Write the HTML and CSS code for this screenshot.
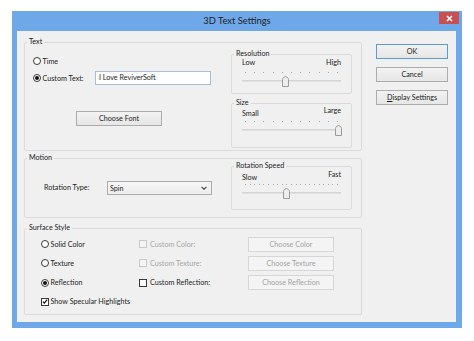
FILE: index.html
```html
<!DOCTYPE html>
<html>
<head>
<meta charset="utf-8">
<link rel="stylesheet" href="styles.css">
</head>
<body>
<div class="window">
  <div class="titlebar">
    <span></span>
    <span class="title">3D Text Settings</span>
    <span class="close"><svg width="7" height="7" viewBox="0 0 7 7"><path d="M1 1L6 6M6 1L1 6" stroke="#fff" stroke-width="1.6"/></svg></span>
  </div>
  <div class="client">
    <div class="groups">
      <fieldset class="group g-text">
        <legend>Text</legend>
        <div class="text-left">
          <div class="opt"><span class="radio"></span><span>Time</span></div>
          <div class="custom-row">
            <div class="opt custom-lbl"><span class="radio on"></span><span>Custom Text:</span></div>
            <div class="input">I Love ReviverSoft</div>
          </div>
          <div class="btn font-btn">Choose Font</div>
        </div>
        <div class="side">
          <fieldset class="sub">
            <legend>Resolution</legend>
            <div class="sl sl-res">
              <div class="sl-labels"><span>Low</span><span>High</span></div>
              <div class="slider">
                <div class="ticks"><i></i><i></i><i></i><i></i><i></i><i></i><i></i><i></i><i></i><i></i><i></i></div>
                <div class="track"></div>
                <svg class="thumb" style="--v:0.44" width="7" height="11" viewBox="0 0 7 11"><path d="M0.5 3.5Q0.5 2.5 1.5 1.5L3.5 0.5L5.5 1.5Q6.5 2.5 6.5 3.5V10.5H0.5Z" fill="#ededed" stroke="#9c9c9c"/></svg>
              </div>
            </div>
          </fieldset>
          <fieldset class="sub sub-size">
            <legend>Size</legend>
            <div class="sl sl-size">
              <div class="sl-labels"><span class="low">Small</span><span>Large</span></div>
              <div class="slider">
                <div class="ticks"><i></i><i></i><i></i><i></i><i></i><i></i><i></i><i></i><i></i><i></i><i></i></div>
                <div class="track"></div>
                <svg class="thumb" style="--v:1" width="7" height="11" viewBox="0 0 7 11"><path d="M0.5 3.5Q0.5 2.5 1.5 1.5L3.5 0.5L5.5 1.5Q6.5 2.5 6.5 3.5V10.5H0.5Z" fill="#ededed" stroke="#9c9c9c"/></svg>
              </div>
            </div>
          </fieldset>
        </div>
      </fieldset>

      <fieldset class="group g-motion">
        <legend>Motion</legend>
        <div class="motion-left">
          <span class="rt-lbl">Rotation Type:</span>
          <div class="select"><span>Spin</span><svg width="6" height="4" viewBox="0 0 6 4"><path d="M0.5 0.8L3 3.2L5.5 0.8" fill="none" stroke="#444" stroke-width="1.1"/></svg></div>
        </div>
        <div class="side side-motion">
          <fieldset class="sub">
            <legend>Rotation Speed</legend>
            <div class="sl sl-speed">
              <div class="sl-labels"><span class="low">Slow</span><span>Fast</span></div>
              <div class="slider">
                <div class="ticks dense"><i></i><i></i><i></i><i></i><i></i><i></i><i></i><i></i><i></i><i></i><i></i><i></i><i></i><i></i><i></i><i></i><i></i><i></i><i></i><i></i><i></i></div>
                <div class="track"></div>
                <svg class="thumb" style="--v:0.45" width="7" height="11" viewBox="0 0 7 11"><path d="M0.5 3.5Q0.5 2.5 1.5 1.5L3.5 0.5L5.5 1.5Q6.5 2.5 6.5 3.5V10.5H0.5Z" fill="#ededed" stroke="#9c9c9c"/></svg>
              </div>
            </div>
          </fieldset>
        </div>
      </fieldset>

      <fieldset class="group g-surface">
        <legend>Surface Style</legend>
        <div class="surface-grid">
          <div class="opt"><span class="radio"></span><span>Solid Color</span></div>
          <div class="opt chk-opt disabled"><span class="check"></span><span>Custom Color:</span></div>
          <div class="btn disabled">Choose Color</div>
          <div class="opt"><span class="radio"></span><span>Texture</span></div>
          <div class="opt chk-opt disabled"><span class="check"></span><span>Custom Texture:</span></div>
          <div class="btn disabled">Choose Texture</div>
          <div class="opt"><span class="radio on"></span><span>Reflection</span></div>
          <div class="opt chk-opt"><span class="check"></span><span>Custom Reflection:</span></div>
          <div class="btn disabled">Choose Reflection</div>
          <div class="opt span-all"><span class="check"><svg width="7" height="7" viewBox="0 0 7 7"><path d="M1 3.6L2.8 5.4L6 1.2" fill="none" stroke="#111" stroke-width="1.4"/></svg></span><span>Show Specular Highlights</span></div>
        </div>
      </fieldset>
    </div>

    <div class="actions">
      <div class="btn default">OK</div>
      <div class="btn">Cancel</div>
      <div class="btn"><span class="u">D</span>isplay Settings</div>
    </div>
  </div>
</div>
</body>
</html>
```

FILE: styles.css
```css
* { box-sizing: border-box; }

body {
  margin: 0;
  background: #ffffff;
  font-family: Lato, "Open Sans", sans-serif;
  font-size: 7.2px;
  color: #1c1c1c;
}

.window {
  margin: 11px 0 0 12px;
  width: 450px;
  height: 317px;
  background: #6fa8e9;
  display: flex;
  flex-direction: column;
}

.titlebar {
  height: 20px;
  display: grid;
  grid-template-columns: 1fr auto 1fr;
  align-items: start;
}

.title {
  font-size: 9.4px;
  color: #222;
  line-height: 20px;
}

.close {
  justify-self: end;
  margin: 1px 3px 0 0;
  width: 20px;
  height: 12px;
  background: #c75050;
  display: flex;
  align-items: center;
  justify-content: center;
}

.client {
  flex: 1;
  margin: 0 6px 6px 5px;
  background: #f0f0f0;
  display: flex;
  gap: 14px;
  padding: 7px 0 0 7px;
}

.groups {
  width: 338px;
  display: flex;
  flex-direction: column;
}

fieldset {
  margin: 0;
  padding: 0;
  border: 1px solid #dadada;
  border-radius: 2px;
  min-width: 0;
}

legend {
  padding: 0 2px;
  margin-left: 2px;
  line-height: 8px;
  height: 8px;
}

/* Text group */
.g-text {
  display: flex;
  padding: 0 9px 2px 0;
}

.text-left {
  flex: 1;
  padding: 9px 0 0 8px;
  display: flex;
  flex-direction: column;
  align-items: flex-start;
}

.opt {
  display: flex;
  align-items: center;
  gap: 1.5px;
  height: 12px;
  white-space: nowrap;
}

.radio {
  width: 8px;
  height: 8px;
  border-radius: 50%;
  border: 1px solid #3a3a3a;
  background: #fff;
  display: flex;
  align-items: center;
  justify-content: center;
  flex: none;
}

.radio.on::after {
  content: "";
  width: 4px;
  height: 4px;
  border-radius: 50%;
  background: #111;
}

.custom-row {
  margin-top: 4px;
  height: 14px;
  display: flex;
  align-items: center;
}

.custom-lbl {
  width: 62px;
}

.input {
  width: 116px;
  height: 14px;
  border: 1px solid #a9bfd9;
  background: #fff;
  padding-left: 3px;
  line-height: 12px;
  white-space: nowrap;
}

.btn {
  height: 15px;
  border: 1px solid #acacac;
  background: linear-gradient(#f2f2f2, #e6e6e6);
  display: flex;
  align-items: center;
  justify-content: center;
  white-space: nowrap;
}

.btn.disabled {
  border-color: #d6d6d6;
  background: #f4f4f4;
  color: #a3a3a3;
}

.btn.default {
  border-color: #5b9bd8;
}

.font-btn {
  width: 86px;
  margin: 26px 0 0 43px;
}

.side {
  width: 121px;
  padding-top: 4px;
  display: flex;
  flex-direction: column;
  gap: 5px;
}

.sl {
  padding: 1px 10px 4px 10px;
}

.sl-size {
  padding: 0 10px 9px 10px;
}

.sl-size .slider {
  margin-top: 1px;
}

.sl-speed {
  padding: 1px 10px 8px 10px;
}

.sl-labels {
  height: 8px;
  line-height: 8px;
  display: flex;
  justify-content: space-between;
  align-items: flex-start;
}

.sl-labels .low {
  margin-top: 3px;
}

.slider {
  position: relative;
  padding: 5px 0 7px 0;
}

.ticks {
  height: 1px;
  margin: 0 3px;
  display: flex;
  justify-content: space-between;
}

.ticks i {
  width: 1px;
  height: 1px;
  background: #a8a8a8;
}

.track {
  margin-top: 7px;
  height: 2px;
  background: #e2e2e2;
  border-top: 1px solid #d4d4d4;
}

.thumb {
  position: absolute;
  top: 9px;
  left: calc(3px + (100% - 6px) * var(--v) - 3.5px);
}

/* Motion group */
.g-motion {
  margin-top: 3px;
  display: flex;
  padding: 0 9px 0 0;
}

.motion-left {
  flex: 1;
  padding: 19px 0 0 19px;
  display: flex;
  align-items: flex-start;
}

.rt-lbl {
  width: 63px;
  height: 14px;
  line-height: 14px;
}

.select {
  width: 105px;
  height: 14px;
  border: 1px solid #acacac;
  background: linear-gradient(#f6f6f6, #ececec);
  display: flex;
  align-items: center;
  justify-content: space-between;
  padding: 0 4px 0 2px;
}

.side-motion {
  padding: 0 0 7px 0;
}

/* Surface group */
.g-surface {
  margin-top: 6px;
}

.surface-grid {
  display: grid;
  grid-template-columns: 98px 109px 86px;
  grid-auto-rows: 15px;
  row-gap: 4.33px;
  padding: 4.5px 0 4.5px 16px;
  align-items: center;
}

.chk-opt {
  gap: 3px;
}

.check {
  width: 8px;
  height: 8px;
  border: 1px solid #3a3a3a;
  background: #fff;
  flex: none;
  display: flex;
  align-items: center;
  justify-content: center;
}

.disabled {
  color: #a6a6a6;
}

.disabled .check {
  border-color: #c8c8c8;
  background: #f4f4f4;
}

.span-all {
  grid-column: 1 / -1;
}

/* Right buttons */
.actions {
  width: 72px;
  padding-top: 6px;
  display: flex;
  flex-direction: column;
  gap: 8px;
}

.u {
  text-decoration: underline;
}
```
